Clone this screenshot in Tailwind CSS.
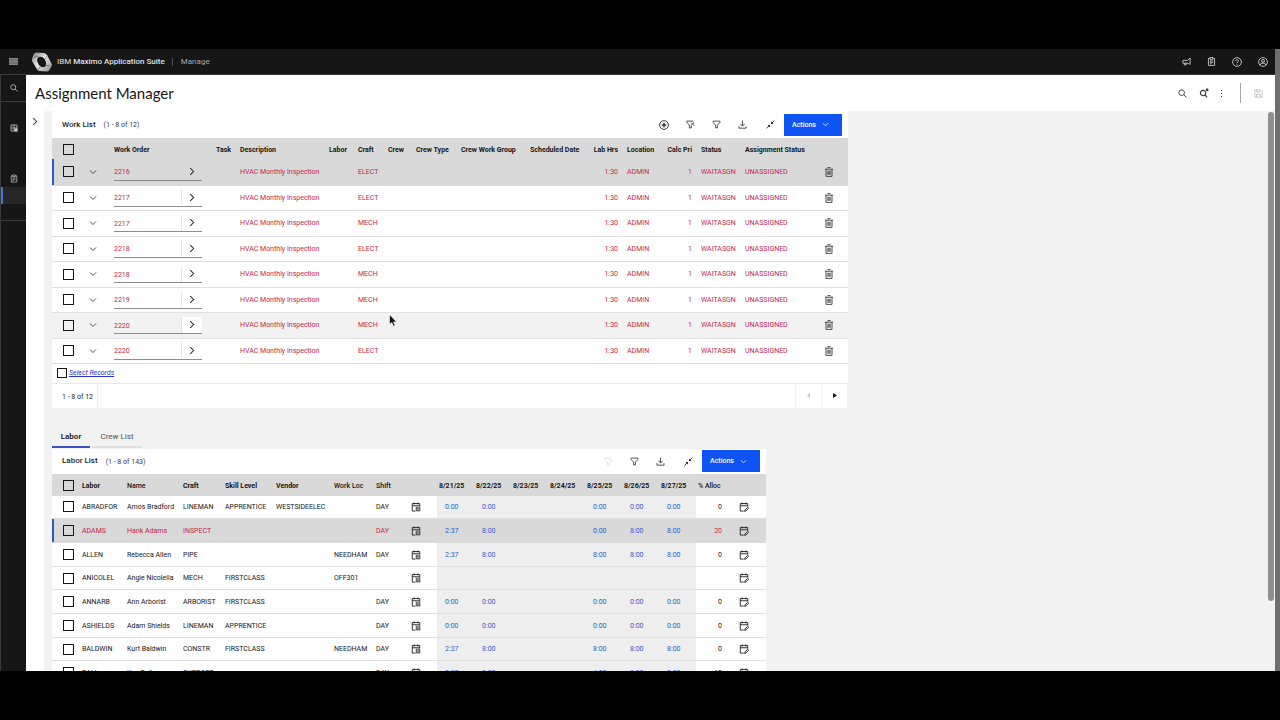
<!DOCTYPE html>
<html lang="en">
<head>
  <meta charset="UTF-8">
  <meta name="viewport" content="width=device-width, initial-scale=1.0">
  <title>Assignment Manager</title>
  <script src="https://cdn.jsdelivr.net/npm/@tailwindcss/browser@4"></script>
</head>
<body class="bg-black font-['Roboto',sans-serif] text-[7px] leading-[10px] text-[#262626]">
  <!-- icon sprite -->
  <svg class="hidden" xmlns="http://www.w3.org/2000/svg">
    <symbol id="search" viewBox="0 0 16 16"><g fill="none" stroke="currentColor" stroke-width="1.6"><circle cx="6.5" cy="6.5" r="5"/><path d="M10.2 10.2 15 15"/></g></symbol>
    <symbol id="search-plus" viewBox="0 0 16 16"><g fill="none" stroke="currentColor" stroke-width="1.8"><circle cx="6.5" cy="8" r="4.3"/><path d="M9.5 11.2 13 15"/></g><circle cx="13" cy="3" r="2.2" fill="currentColor"/></symbol>
    <symbol id="chev-right" viewBox="0 0 16 16"><path d="m4 2 6 6-6 6" fill="none" stroke="currentColor" stroke-width="1.8"/></symbol>
    <symbol id="chev-down" viewBox="0 0 16 16"><path d="m2 5 6 6 6-6" fill="none" stroke="currentColor" stroke-width="1.8"/></symbol>
    <symbol id="trash" viewBox="0 0 16 16"><g fill="none" stroke="currentColor" stroke-width="1.3"><path d="M1.5 3.5h13M5.5 1h5M3.2 3.5V15h9.6V3.5M6.2 6v6.5M9.8 6v6.5M8 6v6.5"/></g></symbol>
    <symbol id="filter" viewBox="0 0 16 16"><path d="M2 2h12v2.5L9.6 9v5H6.4V9L2 4.5z" fill="none" stroke="currentColor" stroke-width="1.4"/></symbol>
    <symbol id="filter-edit" viewBox="0 0 16 16"><g fill="none" stroke="currentColor" stroke-width="1.5"><path d="M13 2H1.5v2.5L6 9v5h3.500v-4"/><path d="m9 4.500 5.500 5.500M14.500 4 9.500 9.500"/></g></symbol>
    <symbol id="download" viewBox="0 0 16 16"><path d="M8 1v9.5M4 6.8l4 4 4-4M1.7 11v3.5h12.6V11" fill="none" stroke="currentColor" stroke-width="1.4"/></symbol>
    <symbol id="minimize" viewBox="0 0 16 16"><path d="M9 2.5V7h4.5zM7 13.5V9H2.5z" fill="currentColor"/><path d="m9 7 6-6M7 9l-6 6" stroke="currentColor" stroke-width="1.5"/></symbol>
    <symbol id="add" viewBox="0 0 16 16"><g fill="none" stroke="currentColor" stroke-width="1.4"><circle cx="8" cy="8" r="7"/><path d="M8 4.2v7.6M4.2 8h7.6" stroke-width="2"/></g></symbol>
    <symbol id="cal-data" viewBox="0 0 16 16"><g fill="none" stroke="currentColor" stroke-width="1.5"><path d="M7 14.5H2v-12h12V7M2 6h12M5 .8v3M11 .8v3"/></g><path d="M7.5 7.5H15V15H7.5z" fill="currentColor" opacity=".7"/><path d="M9.5 9.5H13M9.5 11.5H13" stroke="#fff" stroke-width=".7"/></symbol>
    <symbol id="cal-edit" viewBox="0 0 16 16"><g fill="none" stroke="currentColor" stroke-width="1.5"><path d="M7.5 14.5H2v-12h12v5M2 6h12M5 .8v3M11 .8v3M9 15l.5-2.5 4.5-4 1.500 1.500-4.500 4.500z"/></g></symbol>
    <symbol id="clipboard" viewBox="0 0 16 16"><g fill="none" stroke="currentColor" stroke-width="1.4"><path d="M5 2.5H2.5V15h11V2.5H11M5.2 1h5.6v3H5.2zM5 7h6M5 9.5h6M5 12h3"/></g></symbol>
    <symbol id="announce" viewBox="0 0 16 16"><path d="M14.5 2v11l-5-2h-8V6h8zM4 11v3h3.500v-3" fill="none" stroke="currentColor" stroke-width="1.4"/></symbol>
    <symbol id="help" viewBox="0 0 16 16"><g fill="none" stroke="currentColor" stroke-width="1.3"><circle cx="8" cy="8" r="7"/><path d="M5.8 6.5c0-3 4.5-2.8 4.5-.2C10.3 8 8 7.8 8 9.8M8 11v1.5"/></g></symbol>
    <symbol id="user" viewBox="0 0 16 16"><g fill="none" stroke="currentColor" stroke-width="1.3"><circle cx="8" cy="8" r="7"/><circle cx="8" cy="6.3" r="2.3"/><path d="M4 13v-1.5q0-1.5 2-1.5h4q2 0 2 1.500V13"/></g></symbol>
    <symbol id="save" viewBox="0 0 16 16"><path d="M1.5 1.5h10l3 3v10h-13zM5 1.5v4h5.5v-4M4.5 14.5v-5h7v5" fill="none" stroke="currentColor" stroke-width="1.3"/></symbol>
    <symbol id="grid" viewBox="0 0 16 16"><path d="M2 2h12v12H2zM8 2v12M2 8h12" fill="none" stroke="currentColor" stroke-width="1.6"/><path d="M9 9h6v6H9z" fill="currentColor"/></symbol>
  </svg>

  <div class="flex h-screen flex-col pt-[49px] pb-[49px]">
    <div class="flex min-h-0 flex-1">
      <div class="flex min-w-0 flex-1 flex-col">
        <header class="flex h-[26px] shrink-0 items-center border-b border-[#393939] bg-[#161616] text-[#e0e0e0]">
          <button class="flex w-[26px] justify-center" aria-label="Menu">
            <svg class="size-[9px]" viewBox="0 0 9 9"><path d="M0 1h9v7H0z" fill="#6f6f6f"/><path d="M0 1.5h9M0 4.5h9M0 7.5h9" stroke="#858585"/></svg>
          </button>
          <svg class="ml-[5px] size-[22px]" viewBox="0 0 22 22">
            <defs><linearGradient id="nut" x1="0" y1="0" x2="1" y2="1"><stop offset="0" stop-color="#777"/><stop offset=".45" stop-color="#e8e8e8"/><stop offset="1" stop-color="#8a8a8a"/></linearGradient></defs>
            <path fill="url(#nut)" fill-rule="evenodd" d="M2 5q.3-3 3-3.500L13 2q2 .3 3 2l4.500 8.500q.8 1.700-.2 3.200l-2 3.300q-.8 1.500-2.500 1.500L8.500 20q-1.700-.2-2.500-1.700L1.300 10.500Q.8 9.500 1 8.300zM8 6Q5.500 7.500 6.300 10.500q1 4 4.200 5.500 3.500 1 4.500-2 .6-3-1.500-6Q11 5 8 6z"/>
            <path d="M3 6 7.500 5.500M16 5l-2 3M19.500 15l-4.500-.5M7 19l2.500-3.500" stroke="#666" stroke-width=".7"/>
          </svg>
          <p class="ml-1 text-[8px]">IBM <b class="font-medium">Maximo Application Suite</b></p>
          <span class="mr-2 ml-[7px] h-2 w-px bg-[#525252]"></span>
          <a href="#" class="text-[8px] text-[#a8a8a8]">Manage</a>
          <div class="mr-[7px] ml-auto flex items-center gap-4">
            <button aria-label="Announcements"><svg class="block size-[9px]"><use href="#announce"/></svg></button>
            <button aria-label="Tasks"><svg class="block size-[9px]"><use href="#clipboard"/></svg></button>
            <button aria-label="Help"><svg class="block size-[10px]"><use href="#help"/></svg></button>
            <button aria-label="Profile"><svg class="block size-[10px]"><use href="#user"/></svg></button>
          </div>
        </header>

        <div class="flex min-h-0 flex-1">
          <nav class="flex w-[26px] shrink-0 flex-col border-l border-[#393939] bg-[#161616] text-[#c6c6c6]">
            <a href="#" class="flex h-[27px] items-center justify-center border-b border-[#393939]" aria-label="Search"><svg class="size-2"><use href="#search"/></svg></a>
            <a href="#" class="flex h-[51px] items-center justify-center" aria-label="Applications"><svg class="size-2"><use href="#grid"/></svg></a>
            <a href="#" class="flex h-[34px] items-end justify-center pb-1" aria-label="Work"><svg class="h-[9px] w-2"><use href="#clipboard"/></svg></a>
            <a href="#" class="h-[17px] border-l-2 border-[#4576d8] bg-[#262626]" aria-label="Assignment Manager"></a>
            <div class="h-[17px] border-b border-[#393939]"></div>
          </nav>

          <div class="flex min-w-0 flex-1 flex-col bg-white">
            <div class="flex h-[36px] shrink-0 items-center pr-3 pl-[9px]">
              <h1 class="font-['Lato',sans-serif] text-[15px] leading-5 text-[#161616]">Assignment Manager</h1>
              <div class="ml-auto flex items-center text-[#393939]">
                <button aria-label="Search"><svg class="block size-[9px]"><use href="#search"/></svg></button>
                <button class="ml-3" aria-label="Advanced search"><svg class="block size-[10px]"><use href="#search-plus"/></svg></button>
                <button class="ml-[11px]" aria-label="More"><svg class="block h-2 w-[3px]" viewBox="0 0 3 8"><path d="M1 1h1v1H1zM1 4h1v1H1zM1 7h1v1H1z" fill="#393939"/></svg></button>
                <span class="mr-[13px] ml-[17px] h-5 w-px bg-[#a8a8a8]"></span>
                <button aria-label="Save" disabled><svg class="block size-[9px] text-[#b5b5b5]"><use href="#save"/></svg></button>
              </div>
            </div>

            <div class="flex min-h-0 flex-1">
              <div class="w-[18px] shrink-0 pt-[6px] pl-[5px]"><button aria-label="Expand panel"><svg class="block size-[9px] text-[#393939]"><use href="#chev-right"/></svg></button></div>
              <main class="min-w-0 flex-1 overflow-hidden bg-[#f2f2f2] pl-2">
                <section class="w-max bg-white">
                  <div class="flex h-[27px] items-center pl-[10px]">
                    <h2 class="text-[8px] font-medium">Work List</h2>
                    <span class="ml-2 pt-px text-[#393939]">(1 - 8 of 12)</span>
                    <div class="ml-auto flex items-center gap-[17px] pr-[9px] text-[#262626]">
                      <button aria-label="Add"><svg class="block size-[10px]"><use href="#add"/></svg></button>
                      <button aria-label="Clear filter"><svg class="block size-[9px]"><use href="#filter-edit"/></svg></button>
                      <button aria-label="Filter"><svg class="block size-[9px]"><use href="#filter"/></svg></button>
                      <button aria-label="Download"><svg class="block size-[9px]"><use href="#download"/></svg></button>
                      <button class="ml-[2px]" aria-label="Collapse"><svg class="block size-[9px]"><use href="#minimize"/></svg></button>
                    </div>
                    <button class="mr-[6px] flex h-[22px] w-[58px] items-center justify-between bg-[#0f55f5] pr-[13px] pl-2 text-[7px] font-medium text-white">Actions <svg class="size-[7px]"><use href="#chev-down"/></svg></button>
                  </div>
                  <table class="w-[796px] table-fixed text-left whitespace-nowrap">
                    <colgroup><col class="w-[32px]"><col class="w-[30px]"><col class="w-[92px]"><col class="w-[34px]"><col class="w-[89px]"><col class="w-[29px]"><col class="w-[30px]"><col class="w-[28px]"><col class="w-[45px]"><col class="w-[69px]"><col class="w-[52px]"><col class="w-[45px]"><col class="w-[38px]"><col class="w-[36px]"><col class="w-[44px]"><col class="w-[65px]"><col class="w-[38px]"></colgroup>
                    <thead>
                      <tr class="h-[21px] bg-[#d9d9d9] text-[#161616] *:pt-[2px]">
                        <th class="pl-[11px]"><input type="checkbox" aria-label="Select all work orders" class="block size-[11px] appearance-none border border-[#161616]"></th>
                        <th></th><th>Work Order</th><th class="pr-[9px] text-right">Task</th><th>Description</th><th>Labor</th><th>Craft</th><th>Crew</th><th>Crew Type</th><th>Crew Work Group</th><th>Scheduled Date</th><th class="pr-[9px] text-right">Lab Hrs</th><th>Location</th><th class="pr-[9px] text-right">Calc Pri</th><th>Status</th><th>Assignment Status</th><th></th>
                      </tr>
                    </thead>
                    <tbody id="work" class="text-[#c2274f]"></tbody>
                  </table>
                  <div class="flex h-[19px] items-center gap-[2px] pl-[5px]">
                    <input type="checkbox" id="selrec" class="size-[10px] appearance-none border border-[#161616]">
                    <label for="selrec" class="text-[7px] text-[#2a35c8] italic underline">Select Records</label>
                  </div>
                  <div class="flex h-[25px] items-stretch border-t border-[#e8e8e8]">
                    <span class="flex items-center border-r border-[#f0f0f0] pt-[3px] pr-1 pl-[10px] text-[7px]">1 - 8 of 12</span>
                    <button class="ml-auto flex w-[26px] items-center justify-center border-l border-[#f0f0f0]" aria-label="Previous page" disabled><svg class="h-[5px] w-1" viewBox="0 0 4 5"><path d="M3 0v5L0 2.5z" fill="#c6c6c6"/></svg></button>
                    <button class="flex w-[27px] items-center justify-center border-x border-[#f0f0f0]" aria-label="Next page"><svg class="h-[5px] w-1" viewBox="0 0 4 5"><path d="M0 0v5l4-2.5z" fill="#161616"/></svg></button>
                  </div>
                </section>

                <div class="mt-[20px] mb-px flex gap-[2px] text-[8px]">
                  <button class="h-[20px] w-[38px] border-b-2 border-[#3b4fc8] font-semibold text-[#161616]">Labor</button>
                  <button class="h-[20px] w-[50px] border-b-2 border-[#e0e0e0] text-[#525252]">Crew List</button>
                </div>

                <section class="w-max bg-white">
                  <div class="flex h-[25px] items-center pl-[10px]">
                    <h2 class="text-[8px] font-medium">Labor List</h2>
                    <span class="ml-2 pt-px text-[#393939]">(1 - 8 of 143)</span>
                    <div class="ml-auto flex items-center gap-[17px] pr-[9px] text-[#262626]">
                      <button aria-label="Clear filter" disabled><svg class="block size-[9px] text-[#e0e0e0]"><use href="#filter-edit"/></svg></button>
                      <button aria-label="Filter"><svg class="block size-[9px]"><use href="#filter"/></svg></button>
                      <button aria-label="Download"><svg class="block size-[9px]"><use href="#download"/></svg></button>
                      <button class="ml-[2px]" aria-label="Collapse"><svg class="block size-[9px]"><use href="#minimize"/></svg></button>
                    </div>
                    <button class="mr-[6px] flex h-[22px] w-[58px] items-center justify-between bg-[#0f55f5] pr-[13px] pl-2 text-[7px] font-medium text-white">Actions <svg class="size-[7px]"><use href="#chev-down"/></svg></button>
                  </div>
                  <table class="w-[714px] table-fixed text-left whitespace-nowrap">
                    <colgroup><col class="w-[30px]"><col class="w-[45px]"><col class="w-[56px]"><col class="w-[42px]"><col class="w-[51px]"><col class="w-[58px]"><col class="w-[42px]"><col class="w-[35px]"><col class="w-[26px]"><col class="w-[37px]"><col class="w-[37px]"><col class="w-[37px]"><col class="w-[37px]"><col class="w-[37px]"><col class="w-[37px]"><col class="w-[37px]"><col class="w-[26px]"><col class="w-[44px]"></colgroup>
                    <thead>
                      <tr class="h-[22px] bg-[#d9d9d9] text-[#161616] *:pt-[2px]">
                        <th class="pl-[11px]"><input type="checkbox" aria-label="Select all labor" class="block size-[11px] appearance-none border border-[#161616]"></th>
                        <th>Labor</th><th class="font-medium">Name</th><th>Craft</th><th>Skill Level</th><th>Vendor</th><th class="font-medium">Work Loc</th><th class="font-medium">Shift</th><th></th>
                        <th class="pl-[2px]">8/21/25</th><th class="pl-[2px]">8/22/25</th><th class="pl-[2px]">8/23/25</th><th class="pl-[2px]">8/24/25</th><th class="pl-[2px]">8/25/25</th><th class="pl-[2px]">8/26/25</th><th class="pl-[2px]">8/27/25</th>
                        <th class="pl-[2px] font-medium">% Alloc</th><th></th>
                      </tr>
                    </thead>
                    <tbody id="labor" class="text-[#161616]"></tbody>
                  </table>
                </section>
              </main>
              <div class="w-[7px] shrink-0 bg-[#f2f2f2] pt-px"><div class="h-[489px] w-[6px] rounded-full bg-[#8f8f8f]"></div></div>
            </div>
          </div>
        </div>
      </div>
      <div class="w-[5px] shrink-0 bg-[#6f6f6f]"></div>
    </div>
  </div>

  <svg class="pointer-events-none absolute top-[314px] left-[389px] h-[13px] w-2" viewBox="0 0 8 13"><path d="M.5.5v10l2.300-2 1.600 3.700 1.700-.7-1.600-3.600h3z" fill="#111" stroke="#fff" stroke-width=".6"/></svg>

  <script>
    const orders = [
      ['2216', 'ELECT'], ['2217', 'ELECT'], ['2217', 'MECH'], ['2218', 'ELECT'],
      ['2218', 'MECH'], ['2219', 'MECH'], ['2220', 'MECH'], ['2220', 'ELECT']
    ];
    const labor = [
      ['ABRADFOR', 'Amos Bradford', 'LINEMAN', 'APPRENTICE', 'WESTSIDEELEC', '', 'DAY', ['0:00', '0:00', '', '', '0:00', '0:00', '0:00'], '0'],
      ['ADAMS', 'Hank Adams', 'INSPECT', '', '', '', 'DAY', ['2:37', '8:00', '', '', '0:00', '8:00', '8:00'], '20'],
      ['ALLEN', 'Rebecca Allen', 'PIPE', '', '', 'NEEDHAM', 'DAY', ['2:37', '8:00', '', '', '8:00', '8:00', '8:00'], '0'],
      ['ANICOLEL', 'Angie Nicolella', 'MECH', 'FIRSTCLASS', '', 'OFF301', '', ['', '', '', '', '', '', ''], ''],
      ['ANNARB', 'Ann Arborist', 'ARBORIST', 'FIRSTCLASS', '', '', 'DAY', ['0:00', '0:00', '', '', '0:00', '0:00', '0:00'], '0'],
      ['ASHIELDS', 'Adam Shields', 'LINEMAN', 'APPRENTICE', '', '', 'DAY', ['0:00', '0:00', '', '', '0:00', '0:00', '0:00'], '0'],
      ['BALDWIN', 'Kurt Baldwin', 'CONSTR', 'FIRSTCLASS', '', 'NEEDHAM', 'DAY', ['2:37', '8:00', '', '', '8:00', '8:00', '8:00'], '0'],
      ['BALL', 'Ken Ball', 'SUPPORT', '', '', '', 'DAY', ['2:37', '8:00', '', '', '4:00', '8:00', '8:00'], '10']
    ];
    const box = label => `<input type="checkbox" aria-label="${label}" class="block size-[11px] appearance-none border border-[#161616]">`;

    document.getElementById('work').innerHTML = orders.map(([wo, craft], i) => `
      <tr class="border-b odd:h-[26px] even:h-[25px] ${i === 0 ? 'border-[#d9d9d9] bg-[#d9d9d9]' : i === 6 ? 'border-[#e0e0e0] bg-[#f2f2f2]' : 'border-[#e0e0e0]'}">
        <td class="pl-[11px] ${i === 0 ? 'shadow-[inset_2px_0_0_#2a5bc8]' : ''}">${box('Select ' + wo)}</td>
        <td class="pl-[5px] text-[#393939]"><button class="block" aria-label="Details"><svg class="block size-2"><use href="#chev-down"/></svg></button></td>
        <td><div class="flex h-[18px] w-[88px] items-center border-b border-[#8d8d8d]">
          <input value="${wo}" aria-label="Work Order" class="h-4 min-w-0 flex-1 bg-transparent pt-[2px]">
          <button class="flex h-4 w-[21px] items-center justify-center border-l text-[#262626] ${i === 0 ? 'border-transparent' : i === 6 ? 'border-[#e0e0e0] bg-white' : 'border-[#e8e8e8]'}" aria-label="Open"><svg class="size-[9px]"><use href="#chev-right"/></svg></button>
        </div></td>
        <td></td><td>HVAC Monthly Inspection</td><td></td><td>${craft}</td><td></td><td></td><td></td><td></td>
        <td class="pr-[9px] text-right">1:30</td><td>ADMIN</td><td class="pr-[9px] text-right">1</td><td>WAITASGN</td><td>UNASSIGNED</td>
        <td class="pl-[14px] text-[#262626]"><button class="block" aria-label="Delete"><svg class="block size-[10px]"><use href="#trash"/></svg></button></td>
      </tr>`).join('');

    document.getElementById('labor').innerHTML = labor.map(([id, name, craft, skill, vendor, loc, shift, days, alloc], i) => `
      <tr class="h-[24px] border-b nth-[3n+1]:h-[23px] ${i === 1 ? 'border-[#d9d9d9] bg-[#d9d9d9] text-[#c2274f]' : 'border-[#e0e0e0]'}">
        <td class="pl-[11px] ${i === 1 ? 'shadow-[inset_2px_0_0_#2a5bc8]' : ''}">${box('Select ' + id)}</td>
        <td>${id}</td><td>${name}</td><td>${craft}</td><td>${skill}</td><td>${vendor}</td><td>${loc}</td><td>${shift}</td>
        <td class="text-[#262626]"><button class="block" aria-label="Availability"><svg class="block size-[10px]"><use href="#cal-data"/></svg></button></td>
        ${days.map(d => `<td class="pl-2 ${i === 1 ? '' : 'bg-[#eeeeee]'}"><a href="#" class="text-[#2f5fd0]">${d}</a></td>`).join('')}
        <td class="text-right">${alloc}</td>
        <td class="pl-[17px] text-[#262626]"><button class="block" aria-label="Modify availability"><svg class="block size-[10px]"><use href="#cal-edit"/></svg></button></td>
      </tr>`).join('');
  </script>
</body>
</html>
